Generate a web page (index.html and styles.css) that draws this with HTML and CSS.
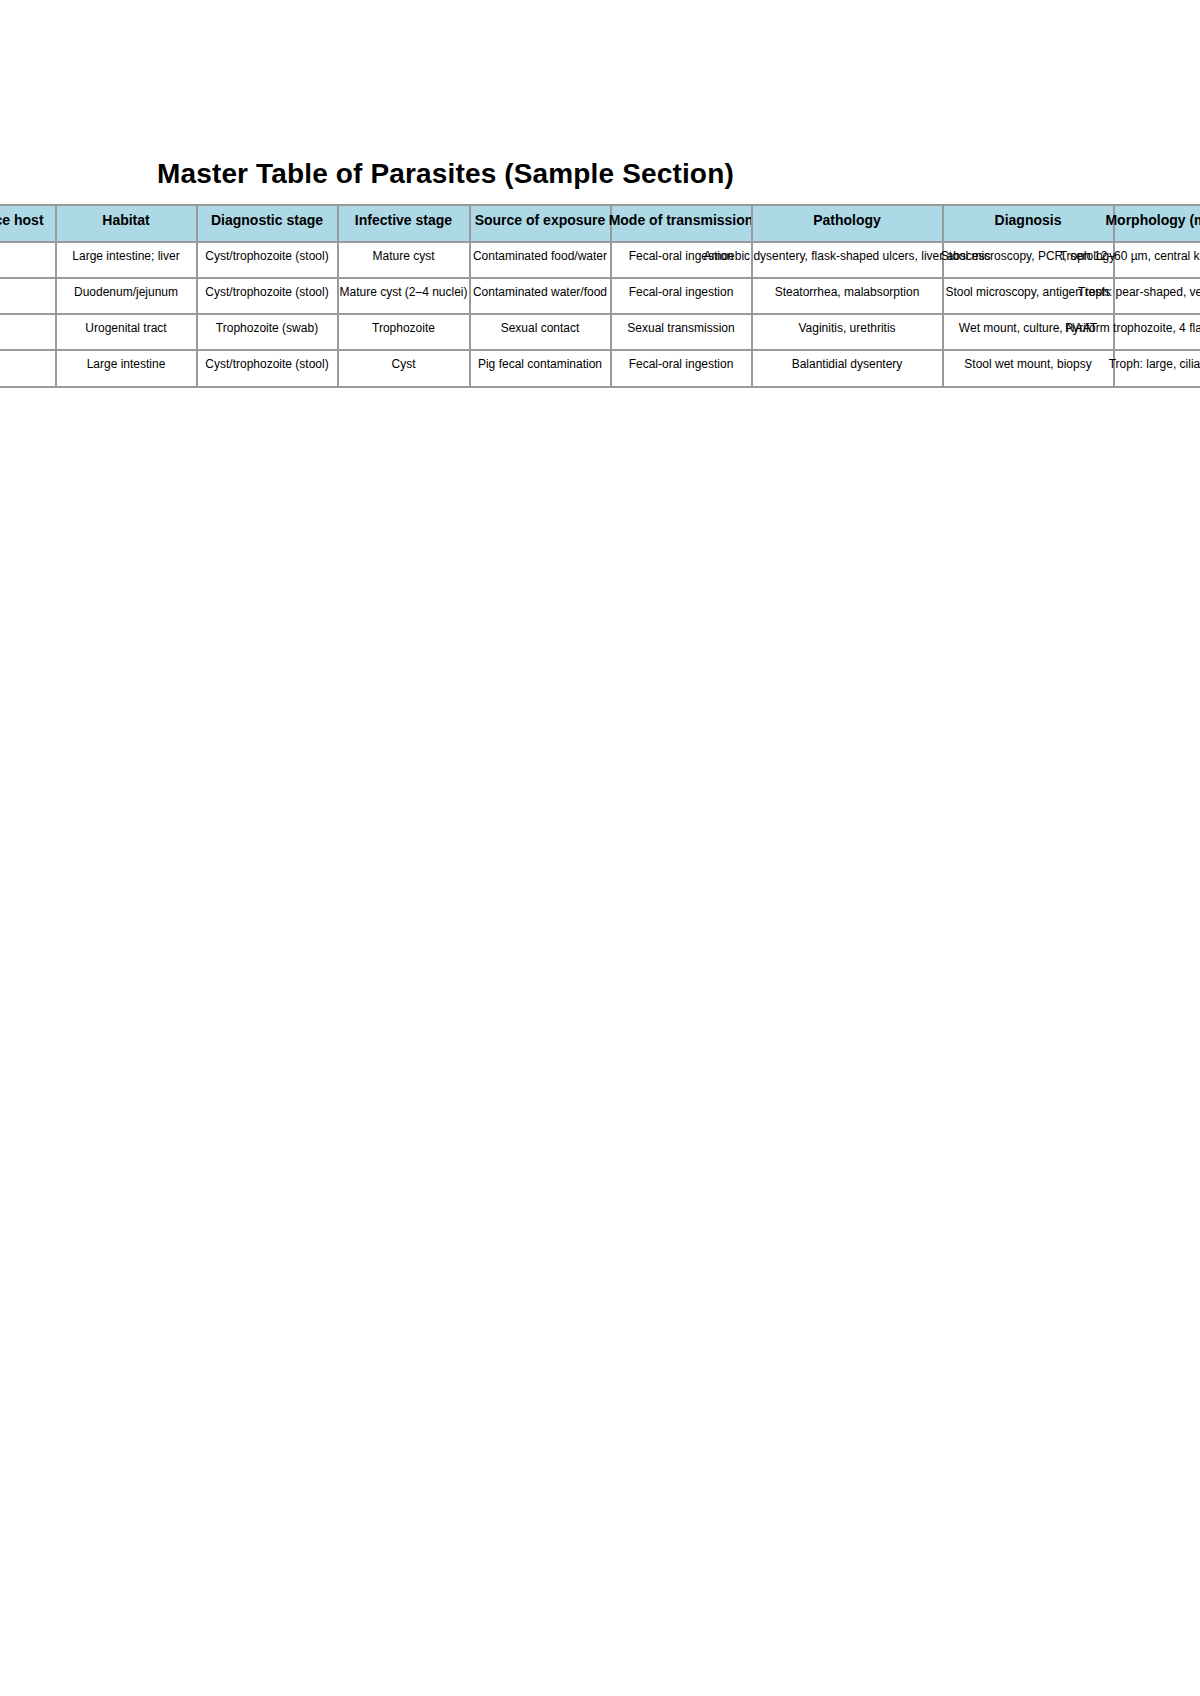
FILE: index.html
```html
<!DOCTYPE html>
<html lang="en">
<head>
<meta charset="utf-8">
<title>Master Table of Parasites (Sample Section)</title>
<link rel="stylesheet" href="styles.css">
</head>
<body>
<main class="page">
  <h1 class="title">Master Table of Parasites (Sample Section)</h1>
  <table class="master">
    <colgroup>
      <col class="w-parasite">
      <col class="w-ref">
      <col class="w-141">
      <col class="w-141">
      <col class="w-132">
      <col class="w-141">
      <col class="w-141">
      <col class="w-191">
      <col class="w-171">
      <col class="w-218">
    </colgroup>
    <thead>
      <tr>
        <th><div class="cell">Parasite</div></th>
        <th><div class="cell">Reference host</div></th>
        <th><div class="cell">Habitat</div></th>
        <th><div class="cell">Diagnostic stage</div></th>
        <th><div class="cell">Infective stage</div></th>
        <th><div class="cell">Source of exposure</div></th>
        <th><div class="cell">Mode of transmission</div></th>
        <th><div class="cell">Pathology</div></th>
        <th><div class="cell">Diagnosis</div></th>
        <th><div class="cell">Morphology (microscopic features)</div></th>
      </tr>
    </thead>
    <tbody>
      <tr>
        <td><div class="cell">Entamoeba histolytica</div></td>
        <td><div class="cell"></div></td>
        <td><div class="cell">Large intestine; liver</div></td>
        <td><div class="cell">Cyst/trophozoite (stool)</div></td>
        <td><div class="cell">Mature cyst</div></td>
        <td><div class="cell">Contaminated food/water</div></td>
        <td><div class="cell">Fecal-oral ingestion</div></td>
        <td><div class="cell">Amoebic dysentery, flask-shaped ulcers, liver abscess</div></td>
        <td><div class="cell">Stool microscopy, PCR, serology</div></td>
        <td><div class="cell">Troph 12–60 µm, central karyosome; cyst 10–20 µm, 4 nuclei</div></td>
      </tr>
      <tr>
        <td><div class="cell">Giardia lamblia</div></td>
        <td><div class="cell"></div></td>
        <td><div class="cell">Duodenum/jejunum</div></td>
        <td><div class="cell">Cyst/trophozoite (stool)</div></td>
        <td><div class="cell">Mature cyst (2–4 nuclei)</div></td>
        <td><div class="cell">Contaminated water/food</div></td>
        <td><div class="cell">Fecal-oral ingestion</div></td>
        <td><div class="cell">Steatorrhea, malabsorption</div></td>
        <td><div class="cell">Stool microscopy, antigen tests</div></td>
        <td><div class="cell">Troph: pear-shaped, ventral sucking disc; cyst 4 nuclei</div></td>
      </tr>
      <tr>
        <td><div class="cell">Trichomonas vaginalis</div></td>
        <td><div class="cell"></div></td>
        <td><div class="cell">Urogenital tract</div></td>
        <td><div class="cell">Trophozoite (swab)</div></td>
        <td><div class="cell">Trophozoite</div></td>
        <td><div class="cell">Sexual contact</div></td>
        <td><div class="cell">Sexual transmission</div></td>
        <td><div class="cell">Vaginitis, urethritis</div></td>
        <td><div class="cell">Wet mount, culture, NAAT</div></td>
        <td><div class="cell">Pyriform trophozoite, 4 flagella, short undulating membrane</div></td>
      </tr>
      <tr>
        <td><div class="cell">Balantidium coli</div></td>
        <td><div class="cell"></div></td>
        <td><div class="cell">Large intestine</div></td>
        <td><div class="cell">Cyst/trophozoite (stool)</div></td>
        <td><div class="cell">Cyst</div></td>
        <td><div class="cell">Pig fecal contamination</div></td>
        <td><div class="cell">Fecal-oral ingestion</div></td>
        <td><div class="cell">Balantidial dysentery</div></td>
        <td><div class="cell">Stool wet mount, biopsy</div></td>
        <td><div class="cell">Troph: large, ciliated; kidney macronucleus</div></td>
      </tr>
    </tbody>
  </table>
</main>
</body>
</html>
```

FILE: styles.css
```css
html,
body {
  margin: 0;
  background: #ffffff;
}

body {
  font-family: "Liberation Sans", Arial, Helvetica, sans-serif;
  color: #000000;
}

.page {
  width: 1200px;
  height: 1696px;
  overflow: hidden;
  padding-top: 156px;
  box-sizing: border-box;
}

.title {
  margin: 0 0 11.5px 157px;
  font-size: 28px;
  line-height: 36px;
  font-weight: bold;
  letter-spacing: 0.15px;
  white-space: nowrap;
}

.master {
  border-collapse: separate;
  border-spacing: 0;
  table-layout: fixed;
  width: 1551px;
  margin-left: -220.5px;
}

.w-parasite { width: 150px; }
.w-ref { width: 125px; }
.w-141 { width: 141px; }
.w-132 { width: 132px; }
.w-191 { width: 191px; }
.w-171 { width: 171px; }
.w-218 { width: 218px; }

.master th,
.master td {
  box-sizing: border-box;
  padding: 6px 0 0;
  vertical-align: top;
  border-left: 2px solid #9a9a9a;
  border-bottom: 2px solid #9a9a9a;
}

.master th {
  position: relative;
  height: 39px;
  background: #add8e6;
  border-top: 2px solid #9a9a9a;
  font-size: 14px;
  line-height: 16px;
  font-weight: bold;
}

.master td {
  height: 36.25px;
  font-size: 12px;
  line-height: 14px;
  font-weight: normal;
}

.cell {
  display: flex;
  justify-content: center;
  white-space: nowrap;
}
```
